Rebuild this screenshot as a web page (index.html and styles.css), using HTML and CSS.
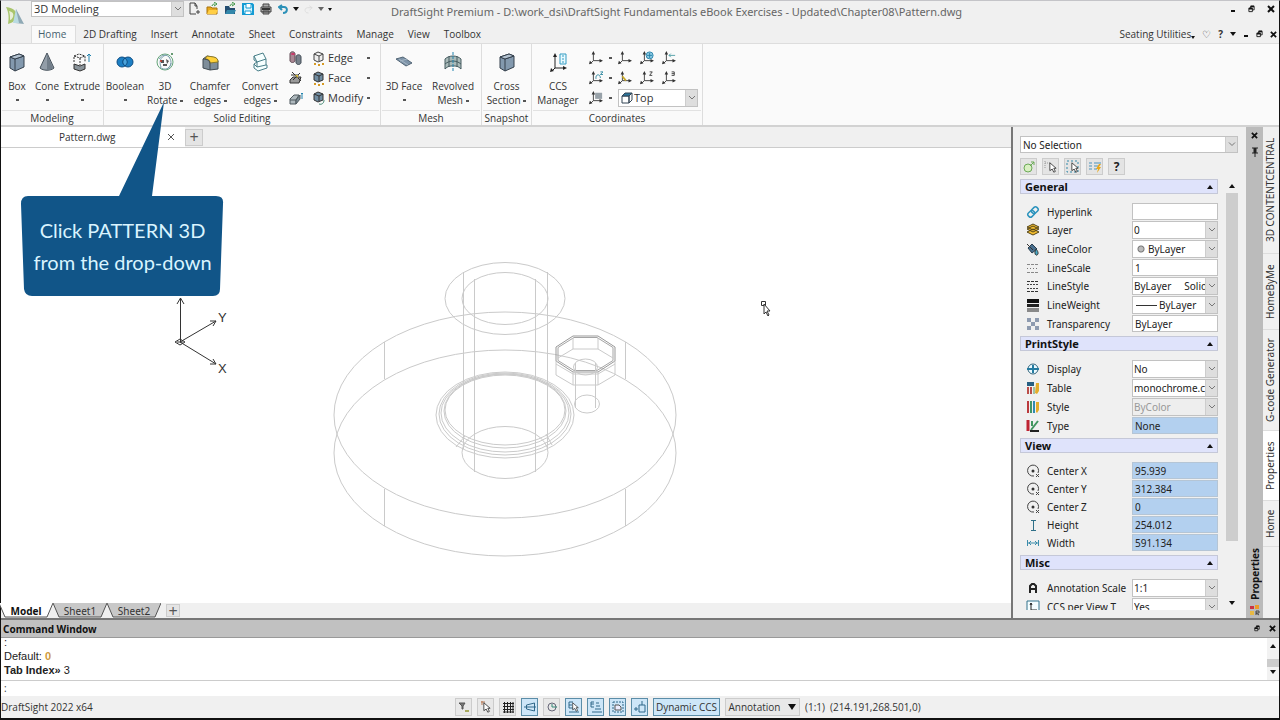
FILE: index.html
```html
<!DOCTYPE html>
<html lang="en">
<head>
  <meta charset="UTF-8">
  <title>DraftSight Premium</title>
  <link rel="stylesheet" href="styles.css">
</head>
<body>
  <svg class="defs" aria-hidden="true">
    <symbol id="cube" viewBox="0 0 20 20">
      <path d="M3 5l9-3 5 2v11l-9 4-5-3z" fill="#8399ae" stroke="#34404c"/>
      <path d="M3 5l5 2 9-3M8 7v12" fill="none" stroke="#34404c"/>
      <path d="M3 5l9-3 5 2-9 3z" fill="#b3c2d0" stroke="#34404c"/>
    </symbol>
    <symbol id="axes" viewBox="0 0 16 16">
      <path d="M5 2v9h9M5 11l-3 3" fill="none" stroke="#333"/>
      <path d="M5 0l2 4H3zM16 11l-4-2v4zM0 15l1-4 3 3z" fill="#333"/>
    </symbol>
    <symbol id="restore" viewBox="0 0 8 8">
      <path d="M3 3V1h4v4H5M1 3h4v4H1z" fill="none" stroke="#111"/>
      <path d="M3 1h4M1 3.500h4" stroke="#111" stroke-width="2"/>
    </symbol>
    <symbol id="cursor" viewBox="0 0 10 14">
      <path d="M1 1v10l3-2 2 4 2-1-2-4h3z" fill="#fff" stroke="#222"/>
    </symbol>
    <symbol id="center" viewBox="0 0 14 14">
      <path d="M8 12a5.500 5.500 0 1 1 4-3" fill="none" stroke="#444"/>
      <circle cx="7" cy="7" r="1.500" fill="#333"/>
      <path d="M10 10l3 3M13 10l-3 3" stroke="#444"/>
    </symbol>
  </svg>

  <div class="app">
    <header class="top">
      <div class="logo">
        <svg width="20" height="20" viewBox="0 0 20 20"><path d="M1 1c8 1 12 5 10 10-1 4-4 6-8 7 1-6 1-11-2-17z" fill="#a9c56c"/><path d="M4 5c4 1 5 3 4 6-1 2-2 3-3 3 0-3 0-6-1-9z" fill="#e9f0d8"/><path d="M11 3l8 15-9-1z" fill="#8fa9b5"/><path d="M11 3l3 14H8z" fill="#b9dbe2"/></svg>
      </div>
      <div class="top-rows">
        <div class="title-row">
          <select class="workspace" aria-label="Workspace"><option>3D Modeling</option></select>
          <div class="quick">
            <button aria-label="New"><svg width="12" height="14" viewBox="0 0 12 14"><path d="M8 12H2V1h5l2 3v3M7 1v3h2M10 8v4M8 10h4" fill="none" stroke="#444"/></svg></button>
            <button aria-label="Open"><svg width="12" height="14" viewBox="0 0 12 14"><path d="M1 12V5h4l1 1h5v6z" fill="#e7a91c" stroke="#a9730c"/><path d="M1 12l2-4h9l-2 4z" fill="#ffce45"/><path d="M6 4c0-2 3-2 3-2M8 0l3 2-3 2" fill="none" stroke="#36923c"/></svg></button>
            <button aria-label="Open from cloud"><svg width="12" height="14" viewBox="0 0 12 14"><path d="M1 12V4h4l1 2h5v6z" fill="#244d70"/><path d="M1 12l2-4h9l-2 4z" fill="#3387ab"/><path d="M6 4c0-2 3-2 3-2M8 0l3 2-3 2" fill="none" stroke="#36923c"/></svg></button>
            <button aria-label="Save"><svg width="12" height="12" viewBox="0 0 12 12"><path d="M1 1h9l1 1v9H1z" fill="#d5f3ff" stroke="#159bd3" stroke-width="2"/><path d="M4 1v4h5V1M3 11V8h6v3" fill="#fff" stroke="#159bd3"/></svg></button>
            <button aria-label="Print"><svg width="12" height="12" viewBox="0 0 12 12"><path d="M3 4V1h6v3M1 4h10v5H1zM3 8h6v3H3z" fill="#aaa" stroke="#444"/><path d="M2 6h8" stroke="#333" stroke-width="2"/></svg></button>
            <button aria-label="Undo"><svg width="10" height="10" viewBox="0 0 10 10"><path d="M4 1L1 3l3 3M1 3h5c4 0 4 6-1 6" fill="none" stroke="#2c91b8" stroke-width="2"/></svg></button>
            <i class="tri"></i>
            <button aria-label="Redo"><svg width="9" height="9" viewBox="0 0 10 10"><path d="M6 1l3 2-3 3M9 3H4C0 3 0 9 5 9" fill="none" stroke="#ddd"/></svg></button>
            <i class="tri grey"></i><i class="tri more"></i>
          </div>
          <h1>DraftSight Premium - D:\work_dsi\DraftSight Fundamentals eBook Exercises - Updated\Chapter08\Pattern.dwg</h1>
          <div class="win">
            <button aria-label="Minimize"><svg width="6" height="8"><path d="M1 6h4" stroke="#111" stroke-width="2"/></svg></button>
            <button aria-label="Restore"><svg width="7" height="8"><use href="#restore"/></svg></button>
            <button aria-label="Close"><svg width="8" height="8" viewBox="0 0 8 8"><path d="M1 1l6 6M7 1L1 7" stroke="#111" stroke-width="2"/></svg></button>
          </div>
        </div>
        <div class="menu-row">
          <nav class="menu">
            <a class="on" href="#">Home</a><a href="#">2D Drafting</a><a href="#">Insert</a><a href="#">Annotate</a><a href="#">Sheet</a><a href="#">Constraints</a><a href="#">Manage</a><a href="#">View</a><a href="#">Toolbox</a>
          </nav>
          <div class="utils">
            <button>Seating Utilities<i class="tri low"></i></button>
            <span>♡</span>
            <button class="help">?</button>
            <i class="tri"></i>
            <button aria-label="Minimize drawing"><svg width="6" height="8"><path d="M1 6h4" stroke="#111" stroke-width="2"/></svg></button>
            <button aria-label="Restore drawing"><svg width="7" height="8"><use href="#restore"/></svg></button>
            <button aria-label="Close drawing"><svg width="7" height="7" viewBox="0 0 8 8"><path d="M1 1l6 6M7 1L1 7" stroke="#111" stroke-width="2"/></svg></button>
          </div>
        </div>
      </div>
    </header>

    <section class="ribbon">
      <div class="group">
        <div class="tools">
          <button class="big s"><svg width="20" height="20"><use href="#cube"/></svg><span>Box</span><i class="dot"></i></button>
          <button class="big s"><svg width="20" height="20" viewBox="0 0 20 20"><path d="M10 1l7 15c-3 3-11 3-14 0z" fill="#929da8" stroke="#46515b"/><path d="M10 2v16c3 0 5-1 6-2z" fill="#727e8a"/></svg><span>Cone</span><i class="dot"></i></button>
          <button class="big m"><svg width="20" height="20" viewBox="0 0 20 20"><path d="M2 12l6 2 5-2v5l-5 2-6-2z" fill="#8a949b" stroke="#333"/><path d="M2 10V4l5-2 6 2v6M2 4l6 2 5-2M8 6v7" fill="none" stroke="#333" stroke-dasharray="2 1"/><path d="M17 10V2M15 4l2-2 2 2" fill="none" stroke="#2083ae"/></svg><span>Extrude</span><i class="dot"></i></button>
        </div>
        <h2>Modeling</h2>
      </div>
      <div class="group">
        <div class="tools">
          <button class="big m"><svg width="20" height="20" viewBox="0 0 20 20"><circle cx="7" cy="10" r="5" fill="#1d7fc4" stroke="#0d4d83"/><circle cx="13" cy="10" r="5" fill="#1d7fc4" stroke="#0d4d83"/><path d="M10 6c-3 3-3 5 0 8 3-3 3-5 0-8z" fill="#4ba3db" stroke="#0d4d83"/></svg><span>Boolean</span><i class="dot"></i></button>
          <button class="big m"><svg width="20" height="20" viewBox="0 0 20 20"><circle cx="10" cy="10" r="8" fill="none" stroke="#65a579"/><path d="M4 7c3-5 8-5 11-1M16 11c0 6-7 8-11 4M6 15c-2-5-1-10 5-12M13 4c4 4 4 9 0 12" fill="none" stroke="#7ba0ae"/><path d="M6 8h3v3H6zM11 7l3 2-2 3zM8 12h4v2H8z" fill="#555"/><circle cx="6" cy="9" r="1" fill="#c32"/><circle cx="17" cy="2" r="1" fill="#357a45"/></svg><span>3D</span><span class="two">Rotate <i class="dot"></i></span></button>
          <button class="big l"><svg width="20" height="20" viewBox="0 0 20 20"><path d="M3 7l4-3 9 2 2 3v8l-8 1-7-2z" fill="#7f8e9a" stroke="#414b52"/><path d="M7 4l7 1c3 1 4 2 4 5l-8 1c0-3-2-4-5-4z" fill="#ffd13a" stroke="#8b7a2d"/><path d="M3 7c5 0 7 2 7 5v6" fill="none" stroke="#414b52"/></svg><span>Chamfer</span><span class="two">edges <i class="dot"></i></span></button>
          <button class="big l"><svg width="20" height="20" viewBox="0 0 20 20"><path d="M4 4l9-3 3 6-9 3zM7 10v5l9-2V7M7 15l-3-3v4l4 3 9-3v-3l-1 0M4 4v4l3 2M4 12l3-2" fill="#f6ffff" stroke="#487e88"/></svg><span>Convert</span><span class="two">edges <i class="dot"></i></span></button>
          <div class="small-grid edit">
            <button aria-label="Clean"><svg width="14" height="14" viewBox="0 0 14 14"><path d="M1 3c0-3 5-3 5 0v7c-1 2-4 2-5 0z" fill="#a98793" stroke="#604b55"/><path d="M7 6c0-3 5-3 5 0v6c-1 2-4 2-5 0z" fill="#77818a" stroke="#454f58"/><ellipse cx="4" cy="3" rx="2" ry="1" fill="#c36"/></svg></button>
            <button><svg width="12" height="15" viewBox="0 0 12 15"><path d="M1 3l4-2 5 2v6l-5 2-4-2zM1 3l5 2 4-2M6 5v5" fill="#eee" stroke="#444"/><path d="M1 13h2M5 14h2M9 13h2" stroke="#d69a24" stroke-width="2"/></svg> Edge</button><i class="dot"></i>
            <button aria-label="Imprint"><svg width="14" height="14" viewBox="0 0 14 14"><path d="M1 9l3-3h8l-2 6H1z" fill="#999" stroke="#333"/><path d="M3 1l9 9M11 2L4 9M2 4h8" stroke="#333"/><path d="M6 4h3v3z" fill="#d5ba39"/></svg></button>
            <button><svg width="12" height="15" viewBox="0 0 12 15"><path d="M1 3l4-2 5 2v6l-5 2-4-2z" fill="#718da2" stroke="#333"/><path d="M1 3l5 2 4-2M6 5v5" fill="none" stroke="#333"/><path d="M1 13h2M5 14h2M9 13h2" stroke="#d69a24" stroke-width="2"/></svg> Face</button><i class="dot"></i>
            <button aria-label="Push face"><svg width="14" height="14" viewBox="0 0 14 14"><path d="M1 8l4-4h5L7 9v4H1zM7 9H1" fill="#aeb8bd" stroke="#4e595e"/><path d="M7 9l4-5v4l-4 5z" fill="#788891" stroke="#4e595e"/><path d="M13 8V2M12 3l1-1 1 1" stroke="#2083ae"/></svg></button>
            <button><svg width="12" height="15" viewBox="0 0 12 15"><path d="M1 3l4-2 5 2v6l-5 2-4-2z" fill="#718da2" stroke="#333"/><path d="M1 3l5 2 4-2M6 5v5" fill="none" stroke="#333"/><path d="M6 13c3 1 5-1 5-4" fill="none" stroke="#498b76"/></svg> Modify</button><i class="dot"></i>
          </div>
        </div>
        <h2>Solid Editing</h2>
      </div>
      <div class="group mesh">
        <div class="tools">
          <button class="big m"><svg width="20" height="20" viewBox="0 0 20 20"><path d="M2 7l7-2 9 6-6 3z" fill="#7d93a8" stroke="#526575"/><path d="M6 9l7-2M5 7l9 6" stroke="#a5b6c4"/></svg><span>3D Face</span><i class="dot"></i></button>
          <button class="big l"><svg width="20" height="20" viewBox="0 0 20 20"><path d="M2 17V7c4-4 12-4 16 0v10c-3-3-5-3-8-3s-5 0-8 3z" fill="#a9bab9" stroke="#465c61"/><path d="M6 4v11M14 4v11M2 12c5-4 11-4 16 0" fill="none" stroke="#465c61"/><path d="M10 0v20" stroke="#2083ae" stroke-dasharray="3 1"/></svg><span>Revolved</span><span class="two">Mesh <i class="dot"></i></span></button>
        </div>
        <h2>Mesh</h2>
      </div>
      <div class="group snapshot">
        <div class="tools">
          <button class="big l"><svg width="20" height="20"><use href="#cube"/></svg><span>Cross</span><span class="two">Section <i class="dot"></i></span></button>
        </div>
        <h2>Snapshot</h2>
      </div>
      <div class="group">
        <div class="tools">
          <button class="big l"><svg width="20" height="20" viewBox="0 0 20 20"><path d="M7 4v12h9M7 16l-3 3" fill="none" stroke="#222"/><path d="M7 1l2 4H5zM19 16l-4-2v4zM2 20l1-4 3 3z" fill="#222"/><path d="M12 2h6v10h-6zM14 4h2M14 7h2M14 10h2" fill="#e9faff" stroke="#329bc2"/></svg><span>CCS</span><span>Manager</span></button>
          <div class="coords">
            <div class="axes-row">
              <button aria-label="CCS origin"><svg width="14" height="14"><use href="#axes"/></svg></button><i class="dot"></i>
              <button aria-label="CCS"><svg width="14" height="14"><use href="#axes"/></svg></button>
              <button aria-label="World CCS"><svg width="14" height="14" viewBox="0 0 16 16"><use href="#axes"/><circle cx="11" cy="5" r="4" fill="#8dcae2" stroke="#2480a9"/><path d="M8 5h6M11 2v6" stroke="#2480a9"/></svg></button>
              <button aria-label="Previous CCS"><svg width="14" height="14" viewBox="0 0 16 16"><use href="#axes"/><path d="M8 5h7M10 3L8 5l2 2" fill="none" stroke="#4699a0"/></svg></button>
            </div>
            <div class="axes-row">
              <button aria-label="Rotate CCS"><svg width="14" height="14" viewBox="0 0 16 16"><use href="#axes"/><path d="M8 9c-1-6 5-6 5-1M13 1h3l-3 3h3" fill="none" stroke="#25839b"/></svg></button><i class="dot"></i>
              <button aria-label="Three point CCS"><svg width="14" height="14" viewBox="0 0 16 16"><use href="#axes"/><path d="M5 6l4 5" stroke="#c9a928" stroke-width="2"/></svg></button>
              <button aria-label="Z axis CCS"><svg width="14" height="14" viewBox="0 0 16 16"><use href="#axes"/><path d="M11 1h3l-3 4h3" fill="none" stroke="#333"/></svg></button>
              <button aria-label="Entity CCS"><svg width="14" height="14" viewBox="0 0 16 16"><use href="#axes"/><path d="M11 1h3v4h-3M11 3h3" fill="none" stroke="#333"/></svg></button>
            </div>
            <div class="axes-row">
              <button aria-label="View CCS"><svg width="14" height="14" viewBox="0 0 16 16"><use href="#axes"/><path d="M7 2h8v7H7z" fill="#98a2a9"/></svg></button><i class="dot"></i>
              <select class="view-select" aria-label="View orientation"><option>Top</option></select>
            </div>
          </div>
        </div>
        <h2>Coordinates</h2>
      </div>
    </section>

    <main class="work">
      <section class="document">
        <div class="doc-tabs">
          <button class="doc-tab"><span>Pattern.dwg</span><svg width="8" height="8" viewBox="0 0 8 8"><path d="M1 1l6 6M7 1L1 7" stroke="#555"/></svg></button>
          <button class="add" aria-label="New tab">+</button>
        </div>
        <div class="canvas">
          <svg class="drawing" width="100%" height="100%">
            <g transform="translate(-1 -148)" fill="none" stroke="#cacaca">
              <ellipse cx="505" cy="415" rx="171" ry="103"/>
              <ellipse cx="505" cy="453" rx="171" ry="103"/>
              <path d="M384.500 342v37M625.500 342v37M384.500 489v37M625.500 489v37"/>
              <ellipse cx="505" cy="298.500" rx="60" ry="36"/>
              <ellipse cx="505" cy="298.500" rx="43" ry="26"/>
              <ellipse cx="505" cy="452.500" rx="43" ry="26"/>
              <path d="M463.500 272v177M474.500 279v193M535.500 279v193M547.500 272v177"/>
              <ellipse cx="505" cy="410" rx="60" ry="35"/>
              <ellipse cx="505" cy="411" rx="61" ry="37"/>
              <ellipse cx="505" cy="413" rx="64" ry="39"/>
              <ellipse cx="505" cy="414" rx="66" ry="41"/>
              <ellipse cx="505" cy="415" rx="69" ry="43"/>
              <path d="M456 447l9-11M552 445l-6-11"/>
              <path d="M573 336h25l17 11v14l-17 11h-25l-17-11v-14z" stroke="#999"/>
              <path d="M574 337.500h23l16 10v13l-16 10h-23l-16-10v-13z" stroke="#a5a5a5"/>
              <path d="M573 338v11h25v-11M573 349l-15 9M598 349l15 9M556 361v14l17 10h25l17-10v-14M573 372v13M598 372v13M556 364l17 10h25l17-10"/>
              <ellipse cx="585.500" cy="367" rx="12" ry="8"/>
              <ellipse cx="587" cy="404" rx="12.500" ry="9"/>
              <path d="M575.500 363v45M595.500 363v45"/>
            </g>
            <g transform="translate(-1 -148)" fill="none" stroke="#333">
              <path d="M180.500 342v-44M177 304l3.500-6 3.500 6M180 342l36-21M210 321h6l-3 5M180 342l36 22M213 359l3 5h-6"/>
              <path d="M175 342l5-3 5 3-5 3zM177 342h6"/>
              <path d="M761.500 301.500h4v4h-4z"/>
              <path d="M764 304v10l2-2 2 4 1-1-2-4h3z" fill="#fff"/>
            </g>
            <g transform="translate(-1 -148)" class="axis-names">
              <text x="218" y="322">Y</text><text x="218" y="373">X</text>
            </g>
          </svg>
          <div class="callout">
            <svg width="203" height="195" viewBox="0 0 203 195"><path d="M143 0l-12 94h64q8 0 7 8l-3 85q0 7-7 7H11q-7 0-8-7L0 102q0-8 7-8h91z" fill="#115588"/></svg>
            <p>Click PATTERN 3D<br>from the drop-down</p>
          </div>
        </div>
        <div class="sheets">
          <button class="sheet on">Model</button><button class="sheet">Sheet1</button><button class="sheet">Sheet2</button>
          <button class="add" aria-label="Add sheet">+</button>
        </div>
      </section>

      <aside class="props">
        <select class="selection" aria-label="Selection"><option>No Selection</option></select>
        <div class="prop-tools">
          <button aria-label="Quick select"><svg width="14" height="14" viewBox="0 0 14 14"><circle cx="6" cy="8" r="4" fill="#d9f0c2" stroke="#6caa57"/><path d="M8 6l4-4M9 2h3v3" fill="none" stroke="#6caa57"/></svg></button>
          <button aria-label="Select"><svg width="14" height="14" viewBox="0 0 14 14"><path d="M1 3h6M1 1v8" stroke="#999" stroke-dasharray="1 1"/><use href="#cursor" x="5" y="2" width="8" height="11"/></svg></button>
          <button aria-label="Select window"><svg width="14" height="14" viewBox="0 0 14 14"><path d="M1 1h11v11H1z" fill="none" stroke="#348aaa" stroke-dasharray="2 2"/><use href="#cursor" x="5" y="2" width="8" height="11"/></svg></button>
          <button aria-label="Quick properties"><svg width="14" height="14" viewBox="0 0 14 14"><path d="M1 3h3M6 3h7M1 6h3M6 6h5M1 9h3M6 9h3" stroke="#4c93bd"/><path d="M11 4L8 9h2l-1 4 4-6h-2l2-3z" fill="#e8a719"/></svg></button>
          <button class="bold">?</button>
        </div>
        <div class="prop-body">
          <div class="sections">
            <section class="section">
              <h3>General <i class="up"></i></h3>
              <div class="fields">
                <svg width="14" height="14" viewBox="0 0 14 14"><g transform="rotate(-45 7 7)" fill="none" stroke="#2b93bd" stroke-width="1.500"><rect x="1" y="4.500" width="7" height="5" rx="2"/><rect x="6" y="4.500" width="7" height="5" rx="2"/></g></svg><label for="hyperlink">Hyperlink</label><input id="hyperlink" type="text">
                <svg width="14" height="14" viewBox="0 0 14 14"><path d="M1 9l6 3 6-3-6-3zM1 6l6 3 6-3-6-3zM1 4l6 3 6-3-6-3z" fill="#f3bd2e" stroke="#53451b"/></svg><label for="layer">Layer</label><select id="layer"><option>0</option></select>
                <svg width="14" height="14" viewBox="0 0 14 14"><path d="M2 6l4-4 5 5-5 4z" fill="#486f8e" stroke="#293d4d"/><path d="M1 2l6 6M10 7c2 2 3 5 1 6s-3-3-1-6" fill="#49aac8" stroke="#333"/></svg><label for="color">LineColor</label><select id="color" class="swatch"><option>ByLayer</option></select>
                <svg width="14" height="14" viewBox="0 0 14 14"><path d="M1 3.500h12M1 11.500h12" stroke="#888" stroke-dasharray="3 1"/><path d="M1 7.500h12" stroke="#777" stroke-dasharray="1 2"/></svg><label for="scale">LineScale</label><input id="scale" type="text" value="1">
                <svg width="14" height="14" viewBox="0 0 14 14"><path d="M1 2.500h12M1 12.500h12" stroke="#333" stroke-dasharray="3 1"/><path d="M1 5.500h12M1 9.500h12" stroke="#444" stroke-dasharray="2 1"/></svg><label for="style">LineStyle</label><select id="style"><option>ByLayer &nbsp; &nbsp; Solid line</option></select>
                <svg width="14" height="14" viewBox="0 0 14 14"><path d="M1 3h12" stroke="#111" stroke-width="4"/><path d="M1 7.500h12" stroke="#222" stroke-width="3"/><path d="M1 11h12M1 13h12" stroke="#222"/></svg><label for="weight">LineWeight</label><select id="weight" class="line"><option>ByLayer</option></select>
                <svg width="14" height="14" viewBox="0 0 14 14"><path d="M1 1h4v4H1zM9 1h4v4H9zM5 5h4v4H5zM1 9h4v4H1zM9 9h4v4H9z" fill="#8e9bb0"/></svg><label for="transparency">Transparency</label><input id="transparency" type="text" value="ByLayer">
              </div>
            </section>
            <section class="section">
              <h3>PrintStyle <i class="up"></i></h3>
              <div class="fields">
                <svg width="14" height="14" viewBox="0 0 14 14"><circle cx="7" cy="7" r="5" fill="#edfaff" stroke="#31647c"/><path d="M1 7h12M7 3v8" stroke="#267ca1" stroke-width="2"/></svg><label for="display">Display</label><select id="display"><option>No</option></select>
                <svg width="14" height="14" viewBox="0 0 14 14"><path d="M1 1h7v4H1z" fill="#275f82"/><path d="M2 6v7M5 6v7" stroke="#ba4d48" stroke-width="2"/><path d="M8 6v7" stroke="#51915a"/><path d="M10 2h3v8l-2 3-2-1z" fill="#e4ad2c"/></svg><label for="table">Table</label><select id="table"><option>monochrome.ctb</option></select>
                <svg width="14" height="14" viewBox="0 0 14 14"><path d="M2 1v12" stroke="#ba393c" stroke-width="2"/><path d="M5 1v12" stroke="#439665" stroke-width="2"/><path d="M8 1v12" stroke="#318ab1" stroke-width="2"/><path d="M10 2h3v8l-2 3-1-1z" fill="#e4ad2c"/></svg><label for="pstyle">Style</label><select id="pstyle" disabled><option>ByColor</option></select>
                <svg width="14" height="14" viewBox="0 0 14 14"><path d="M2 1v11" stroke="#be2332" stroke-width="3"/><path d="M5 11L12 2M6 2v5" stroke="#41965f" stroke-width="2"/><path d="M4 12h9" stroke="#222" stroke-width="2"/></svg><label for="type">Type</label><input id="type" class="locked" type="text" value="None" readonly>
              </div>
            </section>
            <section class="section">
              <h3>View <i class="up"></i></h3>
              <div class="fields">
                <svg width="14" height="14"><use href="#center"/></svg><label for="cx">Center X</label><input id="cx" class="locked" type="text" value="95.939" readonly>
                <svg width="14" height="14"><use href="#center"/></svg><label for="cy">Center Y</label><input id="cy" class="locked" type="text" value="312.384" readonly>
                <svg width="14" height="14"><use href="#center"/></svg><label for="cz">Center Z</label><input id="cz" class="locked" type="text" value="0" readonly>
                <svg width="14" height="14" viewBox="0 0 14 14"><path d="M5 2.500h5M5 12.500h5M7.500 3v9" stroke="#2f6f88"/></svg><label for="height">Height</label><input id="height" class="locked" type="text" value="254.012" readonly>
                <svg width="14" height="14" viewBox="0 0 14 14"><path d="M1.500 4v6M12.500 4v6M2 7h10M5 5L3 7l2 2M9 5l2 2-2 2" fill="none" stroke="#3b8cab"/></svg><label for="width">Width</label><input id="width" class="locked" type="text" value="591.134" readonly>
              </div>
            </section>
            <section class="section">
              <h3>Misc <i class="up"></i></h3>
              <div class="fields">
                <svg width="14" height="14" viewBox="0 0 14 14"><path d="M4 12V5l2-2h2l2 2v7M4 8h6" fill="none" stroke="#222" stroke-width="2"/></svg><label for="annoscale">Annotation Scale</label><select id="annoscale"><option>1:1</option></select>
                <svg width="14" height="14" viewBox="0 0 14 14"><path d="M1 1h12v12H1z" fill="#f4fdff" stroke="#32738c"/><path d="M5 3v7h6M4 5l1-2 1 2" fill="none" stroke="#222"/></svg><label for="ccsview">CCS per View T</label><select id="ccsview"><option>Yes</option></select>
              </div>
            </section>
          </div>
          <div class="scroll"><i class="up"></i><div class="thumb"></div><i class="tri"></i></div>
        </div>
      </aside>
      <div class="dock">
        <button aria-label="Close panel"><svg width="7" height="7" viewBox="0 0 8 8"><path d="M1 1l6 6M7 1L1 7" stroke="#111" stroke-width="2"/></svg></button>
        <button aria-label="Pin panel"><svg width="8" height="10" viewBox="0 0 8 10"><path d="M1 1h6M1 6h6M4 6v4" stroke="#222"/><path d="M4 1v5" stroke="#222" stroke-width="3"/></svg></button>
        <span class="upright">Properties</span>
        <svg width="12" height="12" viewBox="0 0 12 12"><path d="M1 2h4v3H1z" fill="#c34"/><path d="M6 1h4v4H6z" fill="#ec9b28"/><path d="M1 7h4v4H1z" fill="#e8b943"/><path d="M7 11V7h3v2H7l3 2" fill="none" stroke="#444"/></svg>
      </div>
      <nav class="side-tabs">
        <a class="upright t1" href="#">3D CONTENTCENTRAL</a>
        <a class="upright t2" href="#">HomeByMe</a>
        <a class="upright t3" href="#">G-code Generator</a>
        <a class="upright t4 on" href="#">Properties</a>
        <a class="upright t5" href="#">Home</a>
      </nav>
    </main>

    <section class="command">
      <div class="command-head">
        <h2>Command Window</h2>
        <button aria-label="Float"><svg width="6" height="7"><use href="#restore"/></svg></button>
        <button aria-label="Close command window"><svg width="7" height="7" viewBox="0 0 8 8"><path d="M1 1l6 6M7 1L1 7" stroke="#111" stroke-width="2"/></svg></button>
      </div>
      <div class="log">
        <div class="lines">
          <p class="cut">:</p>
          <p>Default: <b class="num">0</b></p>
          <p><b>Tab Index»</b> 3</p>
        </div>
        <div class="log-scroll"><i class="up"></i><div class="thumb"></div><i class="tri"></i></div>
      </div>
      <div class="prompt"><label for="cmd">:</label><input id="cmd" type="text"></div>
    </section>

    <footer class="status">
      <span class="version">DraftSight 2022 x64</span>
      <button aria-label="Filter"><svg width="12" height="12" viewBox="0 0 12 12"><path d="M1 2h6L5 5v3H4V5z" fill="#777" stroke="#555"/><path d="M7 9h4v2H7z" fill="#a8a95e"/></svg></button>
      <button aria-label="Snap"><svg width="12" height="14" viewBox="0 0 12 14"><path d="M1 2h4M2 1v4" stroke="#b67855"/><use href="#cursor" x="3" y="2" width="8" height="11"/></svg></button>
      <button aria-label="Grid"><svg width="12" height="12" viewBox="0 0 12 12"><path d="M2.500 1v11M5.500 1v11M8.500 1v11M11 1v11M1 2.500h11M1 5.500h11M1 8.500h11M1 11h11" stroke="#222"/></svg></button>
      <button class="on" aria-label="Ortho"><svg width="12" height="12" viewBox="0 0 12 12"><path d="M2.500 4l8-2v8l-8-2zM0 6h12" fill="none" stroke="#31698a"/></svg></button>
      <button aria-label="Polar"><svg width="12" height="12" viewBox="0 0 12 12"><circle cx="6" cy="6" r="4" fill="none" stroke="#667"/><path d="M6 3v3h5" fill="none" stroke="#387"/></svg></button>
      <button class="on" aria-label="ESnap"><svg width="12" height="13" viewBox="0 0 12 13"><path d="M5 1H1v6h4M1 4h3M1 11h10" fill="none" stroke="#31698a"/><use href="#cursor" x="4" y="1" width="7" height="10"/></svg></button>
      <button class="on" aria-label="ETrack"><svg width="12" height="12" viewBox="0 0 12 12"><path d="M4 1H1v5h3M1 3h3M6 2h3M6 5h4M5 8h6M2 11h10" fill="none" stroke="#31698a"/></svg></button>
      <button class="on" aria-label="Entity"><svg width="12" height="12" viewBox="0 0 12 12"><path d="M1 1h10v10H1z" fill="none" stroke="#31698a" stroke-dasharray="2 1"/><path d="M3 9V4h4l2 2v3z" fill="#eef" stroke="#555"/></svg></button>
      <button class="on" aria-label="Quick input"><svg width="12" height="12" viewBox="0 0 12 12"><path d="M5 4h6v7H5zM8 0v4M0 8h4M2 6v4" fill="none" stroke="#31698a"/></svg></button>
      <button class="on wide">Dynamic CCS</button>
      <button class="anno">Annotation <i class="tri big-tri"></i></button>
      <span>(1:1)</span><span>(214.191,268.501,0)</span>
    </footer>
  </div>
</body>
</html>
```
FILE: styles.css
```css
* {
  box-sizing: border-box;
}

body {
  margin: 0;
  font-family: "Open Sans", "Noto Sans", sans-serif;
  font-size: 10px;
  line-height: 14px;
  color: #333;
  background: #fff;
}

.app {
  display: flex;
  flex-direction: column;
  height: 100vh;
  border: 1px solid #111;
  border-top-color: #c4c4c8;
  border-bottom-width: 2px;
  background: #f0f0f0;
}

.defs {
  display: none;
}

svg {
  display: block;
  flex-shrink: 0;
}

button, input, select {
  font: inherit;
  color: inherit;
  margin: 0;
}

button {
  display: flex;
  align-items: center;
  justify-content: center;
  padding: 0;
  border: none;
  background: none;
}

a {
  color: inherit;
  text-decoration: none;
}

h1, h2, h3, p {
  margin: 0;
  font-weight: normal;
  font-size: inherit;
}

select, input {
  min-width: 0;
  width: 100%;
  height: 18px;
  padding: 0 2px;
  border: 1px solid #c2c2c2;
  border-radius: 0;
  background: #fff;
  white-space: nowrap;
}

select {
  appearance: none;
  padding-right: 12px;
  background: #fff url("data:image/svg+xml,%3Csvg xmlns='http://www.w3.org/2000/svg' width='12' height='18'%3E%3Cpath d='M0 0h12v18H0z' fill='%23dedede'/%3E%3Cpath d='M0 0v18' stroke='%23bbb'/%3E%3Cpath d='M4 7l3 3 3-3' fill='none' stroke='%23777'/%3E%3C/svg%3E") right center no-repeat;
}

select:disabled {
  color: #999;
  opacity: 1;
  background-color: #eee;
}

input {
  height: 17px;
}

/* small arrows */
.tri, .up {
  display: block;
  flex-shrink: 0;
  width: 0;
  height: 0;
  border: 3px solid transparent;
  border-top: 4px solid #111;
  border-bottom: 0;
}

.up {
  border-top: 0;
  border-bottom: 4px solid #111;
}

.tri.grey {
  border-top-color: #666;
}

.tri.more {
  border-width: 3px 2px 0;
}

.tri.low {
  border-width: 3px 2px 0;
  align-self: flex-end;
  margin-bottom: 2px;
}

.tri.big-tri {
  border-width: 6px 4px 0;
}

.dot {
  display: inline-block;
  width: 3px;
  height: 2px;
  background: #555;
  vertical-align: middle;
}

/* title and menu */
.top {
  display: flex;
  flex-shrink: 0;
  height: 43px;
  border-bottom: 1px solid #ddd;
}

.logo {
  width: 30px;
  padding: 5px 4px;
}

.top-rows {
  flex: 1;
}

.title-row {
  display: flex;
  height: 24px;
}

.workspace {
  width: 153px;
  height: 16px;
  font-size: 11px;
  line-height: 14px;
}

.quick {
  display: flex;
  align-items: center;
  height: 16px;
  padding-left: 4px;
  gap: 6px;
}

.quick .tri {
  margin: 0 -1px;
}

.title-row h1 {
  flex: 1;
  padding: 4px 0 0 60px;
  font-family: "Noto Sans", sans-serif;
  font-size: 11px;
  white-space: nowrap;
  color: #666;
}

.win {
  display: flex;
  align-items: center;
  gap: 12px;
  height: 16px;
  padding-right: 4px;
}

.menu-row {
  display: flex;
  justify-content: space-between;
  height: 18px;
}

.menu {
  display: flex;
}

.menu a {
  padding: 2px 7px 0;
  height: 18px;
}

.menu .on {
  background: #fafafa;
  border: 1px solid #ddd;
  border-bottom: none;
  padding: 1px 9px 0 6px;
  color: #46616f;
}

.utils {
  display: flex;
  align-items: center;
  gap: 7px;
  padding-right: 2px;
}

.help {
  font-weight: bold;
}

/* ribbon */
.ribbon {
  display: flex;
  flex-shrink: 0;
  height: 83px;
  background: #fafafa;
  border-bottom: 2px solid #d2d2d2;
}

.group {
  display: flex;
  flex-direction: column;
  padding: 0 1px;
  border-right: 1px solid #ddd;
}

.tools {
  display: flex;
  height: 66px;
}

.group h2 {
  border-top: 1px solid #e2e2e2;
  text-align: center;
}

.big {
  flex-direction: column;
  justify-content: flex-start;
  padding-top: 8px;
  white-space: nowrap;
}

.big > span:first-of-type {
  margin-top: 7px;
}

.big > .dot {
  margin-top: 6px;
}

.s { width: 30px; }
.m { width: 40px; }
.l { width: 50px; }

.mesh .tools {
  gap: 4px;
  padding: 0 2px;
}

.snapshot .l {
  width: 47px;
}

.small-grid {
  display: grid;
  grid-template-columns: 18px 48px 12px;
  grid-template-rows: repeat(3, 20px);
  align-items: center;
  padding: 4px 0 0 4px;
  column-gap: 6px;
}

.small-grid button {
  justify-content: flex-start;
  gap: 3px;
  font-size: 11px;
}

.coords {
  padding: 4px 3px 0 6px;
}

.axes-row {
  display: flex;
  align-items: center;
  height: 20px;
  gap: 8px;
}

.axes-row .dot {
  margin: 0 -2px;
}

.view-select {
  width: 80px;
  font-size: 11px;
  padding-left: 15px;
  background-image: url("data:image/svg+xml,%3Csvg xmlns='http://www.w3.org/2000/svg' width='12' height='18'%3E%3Cpath d='M0 0h12v18H0z' fill='%23dedede'/%3E%3Cpath d='M0 0v18' stroke='%23bbb'/%3E%3Cpath d='M4 7l3 3 3-3' fill='none' stroke='%23777'/%3E%3C/svg%3E"), url("data:image/svg+xml,%3Csvg xmlns='http://www.w3.org/2000/svg' width='12' height='12'%3E%3Cpath d='M1 4h7v7H1zM8 4l3-3v7l-3 3z' fill='%23fff' stroke='%23345'/%3E%3Cpath d='M1 4l3-3h7L8 4z' fill='%232b759b' stroke='%23345'/%3E%3C/svg%3E");
  background-position: right center, 2px center;
}

/* work area */
.work {
  display: flex;
  flex: 1;
  min-height: 0;
}

.document {
  display: flex;
  flex-direction: column;
  flex: 1;
  min-width: 0;
}

.doc-tabs {
  display: flex;
  align-items: center;
  height: 21px;
  border-bottom: 1px solid #ccc;
}

.doc-tab {
  width: 184px;
  height: 20px;
  padding: 0 10px 0 58px;
  justify-content: space-between;
  background: #fff;
}

.add {
  width: 18px;
  height: 17px;
  border: 1px solid #ccc;
  background: #e4e4e4;
  font-size: 16px;
  color: #555;
}

.canvas {
  position: relative;
  flex: 1;
  background: #fff;
}

.drawing {
  position: absolute;
}

.axis-names {
  font: 13px "Liberation Sans", sans-serif;
  fill: #333;
}

.callout {
  position: absolute;
  left: 20px;
  top: -46px;
}

.callout p {
  position: absolute;
  top: 112px;
  width: 203px;
  text-align: center;
  font-family: "Lato", sans-serif;
  font-size: 20px;
  line-height: 32px;
  white-space: nowrap;
  color: #d9f4ff;
}

.sheets {
  display: flex;
  align-items: center;
  height: 15px;
}

.sheet {
  height: 15px;
  width: 54px;
  font-family: "Noto Sans", sans-serif;
  background: url("data:image/svg+xml,%3Csvg xmlns='http://www.w3.org/2000/svg' width='54' height='15'%3E%3Cpath d='M0 0l6 14h42l6-14' fill='%23c8c8c8' stroke='%23555'/%3E%3C/svg%3E") no-repeat;
}

.sheet.on {
  background-image: url("data:image/svg+xml,%3Csvg xmlns='http://www.w3.org/2000/svg' width='54' height='15'%3E%3Cpath d='M0 0l6 14h42l6-14' fill='%23fff' stroke='%23555'/%3E%3C/svg%3E");
  margin-left: -2px;
  color: #111;
  font-weight: bold;
}

.sheets .add {
  width: 14px;
  height: 13px;
  margin-left: 5px;
}

/* properties */
.props {
  display: flex;
  flex-direction: column;
  width: 235px;
  min-height: 0;
  padding: 9px 7px 8px;
  border-left: 2px solid #777;
  font-family: "Noto Sans", sans-serif;
  color: #222;
}

.selection {
  flex-shrink: 0;
  width: 218px;
  height: 17px;
}

.prop-tools {
  display: flex;
  flex-shrink: 0;
  gap: 5px;
  padding: 5px 0 4px;
}

.prop-tools button {
  width: 17px;
  height: 17px;
  border: 1px solid #ccc;
  background: #e4e4e4;
}

.bold {
  font-weight: bold;
  font-size: 12px;
}

.prop-body {
  display: flex;
  flex: 1;
  gap: 8px;
  min-height: 0;
}

.sections {
  width: 198px;
  overflow: hidden;
}

.section {
  padding-bottom: 4px;
}

.section h3 {
  display: flex;
  align-items: center;
  justify-content: space-between;
  height: 15px;
  padding: 0 4px;
  border: 1px solid #c5c8d8;
  background: #dfe3fb;
  font-weight: bold;
  font-size: 11px;
  color: #111;
}

.fields {
  display: grid;
  grid-template-columns: 14px 78px 86px;
  align-items: center;
  row-gap: 1px;
  column-gap: 7px;
  padding: 9px 0 0 6px;
}

.fields label {
  white-space: nowrap;
}

.fields select {
  padding-left: 1px;
}

.fields .locked {
  background: #b3d0ef;
  border-color: #b5c5d5;
}

.fields .swatch {
  padding-left: 15px;
  background-image: url("data:image/svg+xml,%3Csvg xmlns='http://www.w3.org/2000/svg' width='12' height='18'%3E%3Cpath d='M0 0h12v18H0z' fill='%23dedede'/%3E%3Cpath d='M0 0v18' stroke='%23bbb'/%3E%3Cpath d='M4 7l3 3 3-3' fill='none' stroke='%23777'/%3E%3C/svg%3E"), radial-gradient(circle at 8px 8px, #bbb 2px, #777 3px, transparent 4px);
}

.fields .line {
  padding-left: 26px;
  background-image: url("data:image/svg+xml,%3Csvg xmlns='http://www.w3.org/2000/svg' width='12' height='18'%3E%3Cpath d='M0 0h12v18H0z' fill='%23dedede'/%3E%3Cpath d='M0 0v18' stroke='%23bbb'/%3E%3Cpath d='M4 7l3 3 3-3' fill='none' stroke='%23777'/%3E%3C/svg%3E"), linear-gradient(#333, #333);
  background-position: right center, 3px center;
  background-size: auto, 21px 1px;
}

.scroll, .log-scroll {
  display: flex;
  flex-direction: column;
  align-items: center;
  width: 12px;
}

.scroll {
  padding: 5px 0;
}

.scroll .thumb {
  width: 12px;
  height: 348px;
  margin: 5px 0 auto;
  background: #cdcdcd;
}

.dock {
  display: flex;
  flex-direction: column;
  align-items: center;
  gap: 8px;
  width: 17px;
  padding: 5px 0 2px;
  background: #bbb;
  color: #111;
}

.upright {
  writing-mode: vertical-rl;
  transform: rotate(180deg);
  font-family: "Noto Sans", sans-serif;
  white-space: nowrap;
  text-align: center;
}

.dock .upright {
  margin-top: auto;
  margin-bottom: -4px;
  font-weight: bold;
}

.side-tabs {
  width: 16px;
  display: flex;
  flex-direction: column;
}

.side-tabs a {
  border-top: 1px solid #ddd;
}

.side-tabs .on {
  background: #fff;
}

.t1 { height: 127px; }
.t2 { height: 76px; }
.t3 { height: 101px; }
.t4 { height: 70px; }
.t5 { height: 46px; }

/* command window */
.command {
  flex-shrink: 0;
  border-top: 2px solid #777;
  background: #fff;
}

.command-head {
  display: flex;
  align-items: center;
  gap: 9px;
  height: 18px;
  padding: 0 3px 0 2px;
  background: #c1c1c1;
  border-bottom: 1px solid #999;
}

.command-head h2 {
  flex: 1;
  font-family: "Noto Sans", sans-serif;
  font-weight: bold;
  color: #111;
}

.log {
  display: flex;
  height: 43px;
  border-bottom: 1px solid #ccc;
  font: 11px/14px "Liberation Sans", sans-serif;
}

.lines {
  flex: 1;
  padding-left: 3px;
  color: #222;
}

.lines .cut {
  height: 11px;
  line-height: 8px;
}

.num {
  color: #d09a3c;
}

.log-scroll {
  justify-content: space-between;
  padding: 6px 0;
  background: #f2f2f2;
}

.log-scroll .thumb {
  width: 12px;
  height: 8px;
  margin-top: 8px;
  background: #ccc;
}

.prompt {
  display: flex;
  height: 15px;
  padding-left: 3px;
}

.prompt input {
  height: 14px;
  border: none;
}

/* status bar */
.status {
  display: flex;
  align-items: center;
  flex-shrink: 0;
  gap: 5px;
  height: 22px;
}

.version {
  width: 449px;
}

.status button {
  width: 17px;
  height: 18px;
  border: 1px solid #ccc;
  background: #e8e8e8;
}

.status .on {
  background: #cde6f8;
  border-color: #5b8da8;
}

.status .wide {
  width: 67px;
}

.status .anno {
  width: 75px;
  gap: 8px;
}
```
